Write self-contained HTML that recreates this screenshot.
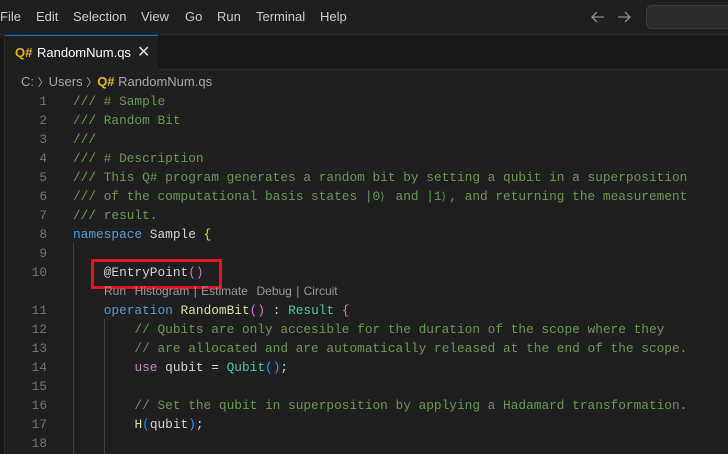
<!DOCTYPE html>
<html><head><style>
*{margin:0;padding:0;box-sizing:border-box}
body{width:728px;height:454px;overflow:hidden;background:#1f1f1f;font-family:"Liberation Sans",sans-serif;position:relative}
.menu{position:absolute;top:0;left:0;width:728px;height:35px;background:#1f1f1f;border-bottom:1px solid #2b2b2b}
.menu span{position:absolute;top:9px;font-size:13px;color:#cccccc}
.tabs{position:absolute;top:35px;left:0;width:728px;height:35px;background:#181818;border-bottom:1px solid #2b2b2b}
.tab{position:absolute;left:5px;top:0;width:153px;height:35px;background:#1f1f1f;border-top:1px solid #0078d4}
.side{position:absolute;left:0;top:35px;width:5px;height:419px;background:#181818;border-right:1px solid #2b2b2b}
.q{color:#e8b51a;font-weight:bold}
.ln{position:absolute;width:47px;text-align:right;color:#6e7681;font-family:"Liberation Mono",monospace;font-size:12.8px}
.l{position:absolute;left:73px;color:#d4d4d4;font-family:"Liberation Mono",monospace;font-size:12.8px;white-space:pre}
.c{color:#6a9955}.k{color:#569cd6}.f{color:#dcdcaa}.t{color:#4ec9b0}.y{color:#ffd700}.p{color:#da70d6}.b{color:#179fff}.u{color:#c586c0}
.g{position:absolute;width:1px;background:#404040}
.a{display:inline-block;width:7.68px;overflow:hidden;vertical-align:bottom;font-size:11px}
</style></head><body>
<div class="menu">
<span style="left:0">File</span><span style="left:36px">Edit</span><span style="left:73px">Selection</span><span style="left:141px">View</span><span style="left:185px">Go</span><span style="left:217px">Run</span><span style="left:256px">Terminal</span><span style="left:320px">Help</span>
<svg style="position:absolute;left:590px;top:10px" width="16" height="14"><path d="M14 7H2M7 2L2 7l5 5" stroke="#8a9199" stroke-width="1.3" fill="none"/></svg>
<svg style="position:absolute;left:616px;top:10px" width="16" height="14"><path d="M2 7h12M9 2l5 5-5 5" stroke="#8a9199" stroke-width="1.3" fill="none"/></svg>
<div style="position:absolute;left:646px;top:5px;width:90px;height:24px;border:1px solid #3c3c3c;border-radius:6px;background:#2a2a2a"></div>
</div>
<div class="tabs"><div class="tab">
<span class="q" style="position:absolute;left:10px;top:9px;font-size:13px">Q#</span>
<span style="position:absolute;left:32px;top:9px;font-size:13px;color:#fff">RandomNum.qs</span>
<span style="position:absolute;left:132px;top:6px;font-size:16px;color:#ddd">✕</span>
</div></div>
<div class="side"></div>
<div style="position:absolute;left:21px;top:74px;font-size:13px;color:#a9a9a9">C: <span style="font-size:11px">〉</span>Users <span style="font-size:11px">〉</span><span class="q">Q#</span> RandomNum.qs</div>

<div class="g" style="left:73px;top:243px;height:211px"></div>
<div class="g" style="left:104px;top:319px;height:135px"></div>

<div class="ln" style="top:94px">1</div><div class="l c" style="top:94px">/// # Sample</div>
<div class="ln" style="top:113px">2</div><div class="l c" style="top:113px">/// Random Bit</div>
<div class="ln" style="top:132px">3</div><div class="l c" style="top:132px">///</div>
<div class="ln" style="top:151px">4</div><div class="l c" style="top:151px">/// # Description</div>
<div class="ln" style="top:170px">5</div><div class="l c" style="top:170px">/// This Q# program generates a random bit by setting a qubit in a superposition</div>
<div class="ln" style="top:189px">6</div><div class="l c" style="top:189px">/// of the computational basis states |0<span class="a">⟩</span> and |1<span class="a">⟩</span>, and returning the measurement</div>
<div class="ln" style="top:208px">7</div><div class="l c" style="top:208px">/// result.</div>
<div class="ln" style="top:227px">8</div><div class="l" style="top:227px"><span class="k">namespace</span> Sample <span class="y">{</span></div>
<div class="ln" style="top:246px">9</div>
<div class="ln" style="top:265px">10</div><div class="l" style="top:265px">    @EntryPoint<span class="p">()</span></div>
<div style="position:absolute;left:91px;top:259px;width:131px;height:30px;border:3px solid #e81123"></div>
<div style="position:absolute;left:104px;top:284px;font-size:12px;color:#999;word-spacing:1px;white-space:pre">Run  Histogram | Estimate  Debug | Circuit</div>
<div class="ln" style="top:303px">11</div><div class="l" style="top:303px">    <span class="k">operation</span> <span class="f">RandomBit</span><span class="p">()</span> : <span class="t">Result</span> <span class="p">{</span></div>
<div class="ln" style="top:322px">12</div><div class="l c" style="top:322px">        // Qubits are only accesible for the duration of the scope where they</div>
<div class="ln" style="top:341px">13</div><div class="l c" style="top:341px">        // are allocated and are automatically released at the end of the scope.</div>
<div class="ln" style="top:360px">14</div><div class="l" style="top:360px">        <span class="u">use</span> qubit = <span class="t">Qubit</span><span class="b">()</span>;</div>
<div class="ln" style="top:379px">15</div>
<div class="ln" style="top:398px">16</div><div class="l c" style="top:398px">        // Set the qubit in superposition by applying a Hadamard transformation.</div>
<div class="ln" style="top:417px">17</div><div class="l" style="top:417px">        <span class="f">H</span><span class="b">(</span>qubit<span class="b">)</span>;</div>
<div class="ln" style="top:436px">18</div>
</body></html>
